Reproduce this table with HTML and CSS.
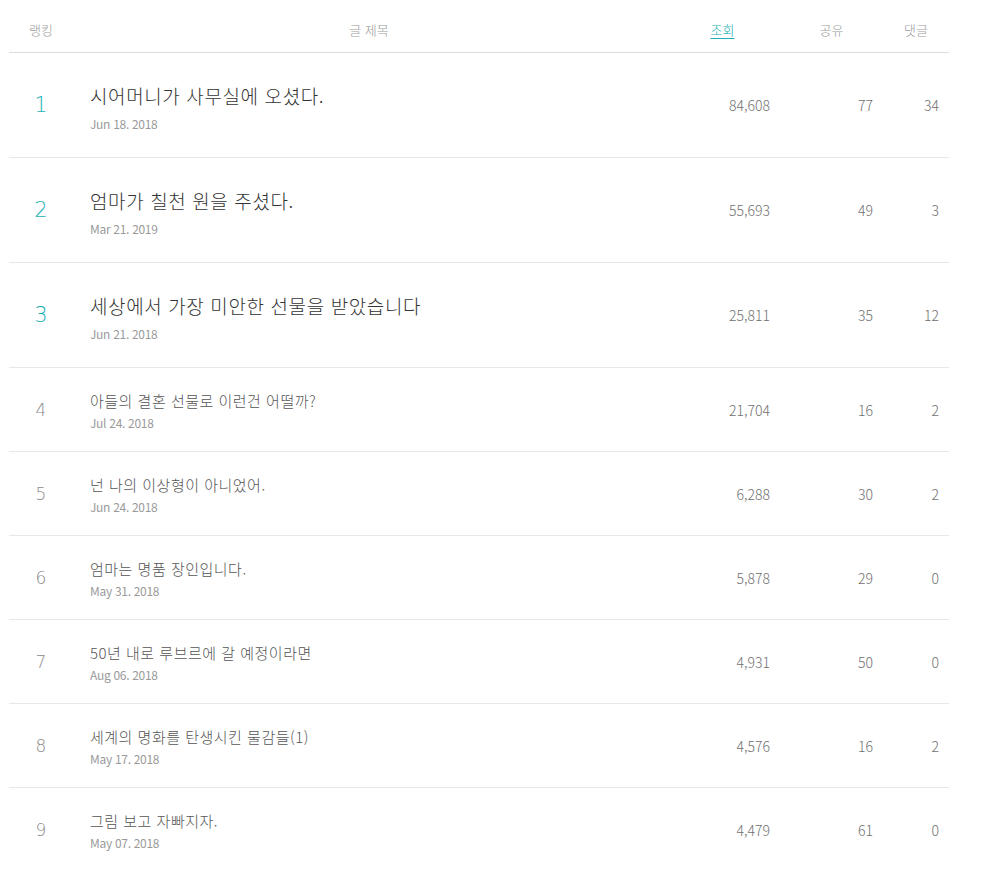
FILE: index.html
```html
<!DOCTYPE html>
<html lang="ko">
<head>
<meta charset="utf-8">
<link rel="stylesheet" href="styles.css">
</head>
<body>
<div class="table">
  <div class="row head">
    <div class="c-rank">랭킹</div>
    <div class="c-title">글 제목</div>
    <div class="c-num"><span class="active">조회</span></div>
    <div class="c-num">공유</div>
    <div class="c-num">댓글</div>
  </div>

  <div class="row top">
    <div class="c-rank">1</div>
    <div class="c-title"><div class="t">시어머니가 사무실에 오셨다.</div><div class="d">Jun 18. 2018</div></div>
    <div class="c-num">84,608</div><div class="c-num">77</div><div class="c-num">34</div>
  </div>
  <div class="row top">
    <div class="c-rank">2</div>
    <div class="c-title"><div class="t">엄마가 칠천 원을 주셨다.</div><div class="d">Mar 21. 2019</div></div>
    <div class="c-num">55,693</div><div class="c-num">49</div><div class="c-num">3</div>
  </div>
  <div class="row top">
    <div class="c-rank">3</div>
    <div class="c-title"><div class="t">세상에서 가장 미안한 선물을 받았습니다</div><div class="d">Jun 21. 2018</div></div>
    <div class="c-num">25,811</div><div class="c-num">35</div><div class="c-num">12</div>
  </div>
  <div class="row">
    <div class="c-rank">4</div>
    <div class="c-title"><div class="t">아들의 결혼 선물로 이런건 어떨까?</div><div class="d">Jul 24. 2018</div></div>
    <div class="c-num">21,704</div><div class="c-num">16</div><div class="c-num">2</div>
  </div>
  <div class="row">
    <div class="c-rank">5</div>
    <div class="c-title"><div class="t">넌 나의 이상형이 아니었어.</div><div class="d">Jun 24. 2018</div></div>
    <div class="c-num">6,288</div><div class="c-num">30</div><div class="c-num">2</div>
  </div>
  <div class="row">
    <div class="c-rank">6</div>
    <div class="c-title"><div class="t">엄마는 명품 장인입니다.</div><div class="d">May 31. 2018</div></div>
    <div class="c-num">5,878</div><div class="c-num">29</div><div class="c-num">0</div>
  </div>
  <div class="row">
    <div class="c-rank">7</div>
    <div class="c-title"><div class="t">50년 내로 루브르에 갈 예정이라면</div><div class="d">Aug 06. 2018</div></div>
    <div class="c-num">4,931</div><div class="c-num">50</div><div class="c-num">0</div>
  </div>
  <div class="row">
    <div class="c-rank">8</div>
    <div class="c-title"><div class="t">세계의 명화를 탄생시킨 물감들(1)</div><div class="d">May 17. 2018</div></div>
    <div class="c-num">4,576</div><div class="c-num">16</div><div class="c-num">2</div>
  </div>
  <div class="row">
    <div class="c-rank">9</div>
    <div class="c-title"><div class="t">그림 보고 자빠지자.</div><div class="d">May 07. 2018</div></div>
    <div class="c-num">4,479</div><div class="c-num">61</div><div class="c-num">0</div>
  </div>
</div>
</body>
</html>
```

FILE: styles.css
```css
html, body {
  margin: 0;
  padding: 0;
  background: #fff;
}
body {
  font-family: "Noto Sans CJK KR", "Noto Sans", sans-serif;
  color: #333;
}
.table {
  width: 940px;
  margin-left: 9px;
}
.row {
  display: grid;
  grid-template-columns: 64px 592px 115px 103px 66px;
  align-items: center;
  height: 84px;
  border-bottom: 1px solid #e8e8e8;
  box-sizing: border-box;
}
.row.top {
  height: 105px;
}
.row.head {
  height: 53px;
  border-bottom: 1px solid #dcdcdc;
}
.row.head > div {
  text-align: center;
  padding: 6px 0 0 0;
  font-size: 13px;
  color: #9a9a9a;
  font-weight: 300;
  font-family: "Noto Sans CJK KR", sans-serif;
}
.active {
  color: #1bb1b5;
  text-decoration: underline;
  text-underline-offset: 3px;
}
.c-rank {
  text-align: center;
  font-size: 17px;
  color: #8a8a8a;
  font-weight: 200;
  font-family: "DejaVu Sans", "Noto Sans", sans-serif;
}
.row.top .c-rank {
  font-size: 21px;
  color: #1bb1b5;
}
.c-title {
  padding-left: 17px;
  min-width: 0;
}
.t {
  font-size: 15px;
  line-height: 22px;
  letter-spacing: 0.5px;
  color: #555;
  font-weight: 300;
  white-space: nowrap;
  margin-top: 2px;
}
.row.top .t {
  font-size: 19px;
  line-height: 26px;
  letter-spacing: 0.6px;
  color: #333;
  margin-top: 6px;
}
.d {
  font-size: 12px;
  line-height: 18px;
  letter-spacing: -0.3px;
  color: #9a9a9a;
  margin-top: 2px;
}
.row.top .d {
  margin-top: 6px;
}
.c-num {
  text-align: right;
  padding-right: 10px;
  font-size: 14px;
  color: #707070;
  font-weight: 300;
}
```
